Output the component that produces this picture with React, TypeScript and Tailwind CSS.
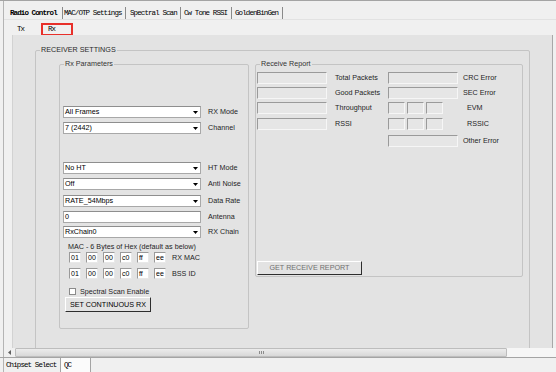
import React from 'react';

const sans = "font-['Liberation_Sans',Arial,sans-serif]";
const mono = "font-['Liberation_Mono','DejaVu_Sans_Mono',monospace]";

const DownArrow = () => (
  <svg width="5" height="3" viewBox="0 0 5 3">
    <path d="M0 0h5L2.5 3z" fill="#000" />
  </svg>
);

const Combo: React.FC<{ value: string; label: string; className: string; arrow?: boolean }> = ({
  value,
  label,
  className,
  arrow = true,
}) => (
  <div className={`flex h-[12px] items-center ${className}`}>
    <div className="ml-[3px] flex h-full w-[138px] items-center border border-[#a8a8a8] border-t-[#8e8e8e] bg-white">
      <span className="flex-1 truncate pl-[1px] text-[7.2px] leading-none text-black">{value}</span>
      {arrow && (
        <span className="flex h-full w-[10px] items-center justify-center">
          <DownArrow />
        </span>
      )}
    </div>
    <span className="ml-[7px] text-[7.2px] leading-none text-[#1e1e1e]">{label}</span>
  </div>
);

// sunken read-only box in the receive report
const Box: React.FC<{ w: string }> = ({ w }) => (
  <div
    className={`h-[12px] ${w} border border-t-[#9a9a9a] border-l-[#9a9a9a] border-r-[#f6f6f6] border-b-[#f6f6f6] bg-[#e6e6e6]`}
  />
);

const HexBox: React.FC<{ v: string }> = ({ v }) => (
  <div className="flex h-[11px] w-[12px] items-center border border-t-[#9a9a9a] border-l-[#9a9a9a] border-r-[#e8e8e8] border-b-[#e8e8e8] bg-white pl-[1px] text-[7px] leading-none text-black">
    {v}
  </div>
);

const mac = ['01', '00', '00', 'c0', 'ff', 'ee'];

const App: React.FC = () => {
  return (
    <div className={`flex h-[372px] w-[556px] flex-col overflow-hidden bg-[#f0f0f0] ${sans}`}>
      {/* top tab strip */}
      <div className="h-[19px] border-t border-[#a4a4a4]">
        <div className={`ml-[3px] flex h-full items-end border-l border-[#b4b4b4] text-[7.5px] tracking-[-0.9px] text-black ${mono}`}>
          <span className="h-[12px] w-[59px] border-r border-[#8a8a8a] pl-[6px] font-bold leading-[12px]">Radio Control</span>
          <span className="h-[12px] w-[63px] border-r border-[#8a8a8a] pl-[1px] leading-[12px]">MAC/OTP Settings</span>
          <span className="h-[12px] w-[55px] border-r border-[#8a8a8a] pl-[4px] leading-[12px]">Spectral Scan</span>
          <span className="h-[12px] w-[51px] border-r border-[#8a8a8a] pl-[3px] leading-[12px]">Cw Tone RSSI</span>
          <span className="h-[12px] w-[51px] border-r border-[#8a8a8a] pl-[3px] leading-[12px]">GoldenBinGen</span>
        </div>
      </div>

      <div className="ml-[3px] flex flex-col border-l border-[#b4b4b4]">
        {/* Tx / Rx sub tabs */}
        <div className={`flex h-[16px] items-start border-t border-[#e2e2e2] text-[7.5px] tracking-[-0.9px] text-black ${mono}`}>
          <span className="mt-[3px] w-[37px] pl-[13px] leading-[12px]">Tx</span>
          <span className="mt-[3px] h-[13px] w-[32px] border-2 border-[#e8302a] pl-[5px] leading-[9px]">Rx</span>
        </div>

        {/* content panel */}
        <div className="flex h-[313px]">
          <div className="w-[8px]" />
          <div className="h-full w-[541px] overflow-hidden border-l border-r border-l-[#d2d2d2] border-r-[#a8a8a8] bg-[#e3e3e3]">
            <fieldset className="ml-[22px] mt-[10px] h-[320px] w-[495px] rounded-[2px] border border-[#c4c4c4]">
              <legend className="ml-[4px] px-[1px] text-[7.2px] leading-[10px] text-[#2a2a2a]">RECEIVER SETTINGS</legend>
              <div className="flex items-start">
                {/* Rx Parameters */}
                <fieldset className="ml-[23px] mt-[4px] h-[270px] w-[190px] rounded-[2px] border border-[#c4c4c4]">
                  <legend className="ml-[4px] px-[1px] text-[7.2px] leading-[10px] text-[#333]">Rx Parameters</legend>
                  <div className="flex flex-col">
                    <Combo className="mt-[37px]" value="All Frames" label="RX Mode" />
                    <Combo className="mt-[4px]" value="7 (2442)" label="Channel" />
                    <Combo className="mt-[28px]" value="No HT" label="HT Mode" />
                    <Combo className="mt-[4px]" value="Off" label="Anti Noise" />
                    <Combo className="mt-[5px]" value="RATE_54Mbps" label="Data Rate" />
                    <Combo className="mt-[4px]" value="0" label="Antenna" arrow={false} />
                    <Combo className="mt-[3px]" value="RxChain0" label="RX Chain" />

                    <div className="ml-[8px] mt-[4px] text-[7.2px] leading-[9px] text-[#1e1e1e]">
                      MAC - 6 Bytes of Hex (default as below)
                    </div>
                    <div className="ml-[9px] mt-[1px] flex items-center gap-[5px]">
                      {mac.map((v, i) => (
                        <HexBox key={i} v={v} />
                      ))}
                      <span className="ml-[1px] text-[7.2px] leading-none text-[#1e1e1e]">RX MAC</span>
                    </div>
                    <div className="ml-[9px] mt-[5px] flex items-center gap-[5px]">
                      {mac.map((v, i) => (
                        <HexBox key={i} v={v} />
                      ))}
                      <span className="ml-[1px] text-[7.2px] leading-none text-[#1e1e1e]">BSS ID</span>
                    </div>
                    <div className="ml-[9px] mt-[8px] flex h-[9px] items-center">
                      <div className="h-[7px] w-[7px] border border-[#8a8a8a] bg-white" />
                      <span className="ml-[4px] text-[7.2px] leading-none text-[#1e1e1e]">Spectral Scan Enable</span>
                    </div>
                    <button className="ml-[5px] mt-[1px] h-[15px] w-[86px] border border-t-white border-l-white border-r-[#2e2e2e] border-b-[#2e2e2e] bg-[#e3e3e3] text-[7.2px] leading-none text-black">
                      SET CONTINUOUS RX
                    </button>
                  </div>
                </fieldset>

                {/* Receive Report */}
                <fieldset className="ml-[6px] mt-[4px] h-[218px] w-[268px] rounded-[2px] border border-[#c4c4c4]">
                  <legend className="ml-[4px] px-[1px] text-[7.2px] leading-[10px] text-[#333]">Receive Report</legend>
                  <div className="flex h-[206px] flex-col pl-[1px] text-[7.2px] leading-none text-[#1e1e1e]">
                    <div className="mt-[3px] flex h-[12px] items-center">
                      <Box w="w-[70px]" />
                      <span className="ml-[8px] w-[53px]">Total Packets</span>
                      <Box w="w-[70px]" />
                      <span className="ml-[5px]">CRC Error</span>
                    </div>
                    <div className="mt-[3px] flex h-[12px] items-center">
                      <Box w="w-[70px]" />
                      <span className="ml-[8px] w-[53px]">Good Packets</span>
                      <Box w="w-[70px]" />
                      <span className="ml-[5px]">SEC Error</span>
                    </div>
                    <div className="mt-[3px] flex h-[12px] items-center">
                      <Box w="w-[70px]" />
                      <span className="ml-[8px] w-[53px]">Throughput</span>
                      <div className="flex w-[70px] gap-[2px]">
                        <Box w="w-[17px]" />
                        <Box w="w-[17px]" />
                        <Box w="w-[17px]" />
                      </div>
                      <span className="ml-[9px]">EVM</span>
                    </div>
                    <div className="mt-[4px] flex h-[12px] items-center">
                      <Box w="w-[70px]" />
                      <span className="ml-[8px] w-[53px]">RSSI</span>
                      <div className="flex w-[70px] gap-[2px]">
                        <Box w="w-[17px]" />
                        <Box w="w-[17px]" />
                        <Box w="w-[17px]" />
                      </div>
                      <span className="ml-[9px]">RSSIC</span>
                    </div>
                    <div className="mt-[5px] flex h-[12px] items-center">
                      <div className="w-[131px]" />
                      <Box w="w-[70px]" />
                      <span className="ml-[5px]">Other Error</span>
                    </div>
                    <button className="mt-auto h-[14px] w-[105px] border border-t-white border-l-white border-r-[#2e2e2e] border-b-[#2e2e2e] bg-[#e3e3e3] text-[7.2px] leading-none text-[#707070]">
                      GET RECEIVE REPORT
                    </button>
                  </div>
                </fieldset>
              </div>
            </fieldset>
          </div>
          <div className="w-[3px]" />
        </div>

        {/* horizontal scrollbar */}
        <div className="flex h-[9px]">
          <div className="flex w-[11px] items-center justify-center bg-[#f0f0f0]">
            <svg width="3" height="5" viewBox="0 0 3 5">
              <path d="M3 0v5L0 2.5z" fill="#606060" />
            </svg>
          </div>
          <div className="flex w-[492px] items-center justify-center rounded-[1px] border border-[#bdbdbd] bg-gradient-to-b from-[#ececec] to-[#d8d8d8]">
            <div className="flex gap-[1px]">
              <span className="h-[3px] w-px bg-[#8c8c8c]" />
              <span className="h-[3px] w-px bg-[#8c8c8c]" />
              <span className="h-[3px] w-px bg-[#8c8c8c]" />
            </div>
          </div>
          <div className="flex-1 bg-[#f6f6f6]" />
        </div>
      </div>

      {/* bottom tabs */}
      <div className={`flex h-[15px] border-t border-[#a4a4a4] text-[7.5px] tracking-[-0.9px] text-black ${mono}`}>
        <span className="ml-[3px] w-[57px] border-l border-[#b4b4b4] pl-[2px] leading-[14px]">Chipset Select</span>
        <span className="w-[31px] border-l border-r border-[#a4a4a4] bg-[#fbfbfb] pl-[3px] leading-[14px]">QC</span>
      </div>
    </div>
  );
};

export default App;
